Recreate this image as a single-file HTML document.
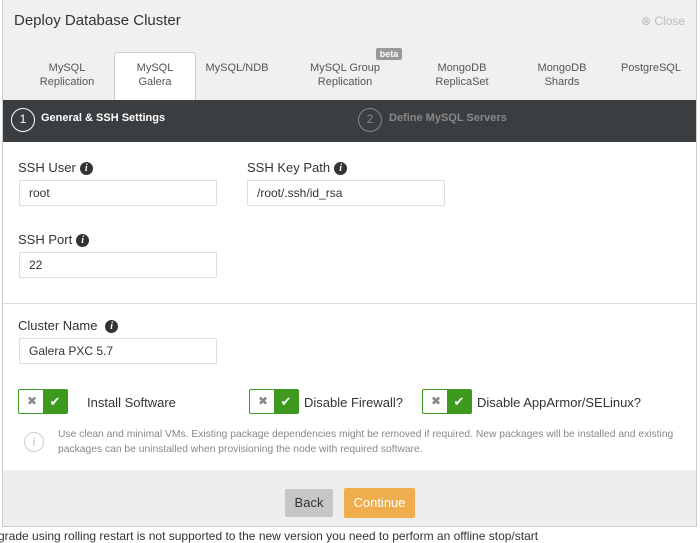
<!DOCTYPE html>
<html><head><style>
*{box-sizing:border-box;margin:0;padding:0}
body{width:700px;height:538px;background:#fff;font-family:"Liberation Sans",sans-serif;position:relative;overflow:hidden;color:#333}
.a{position:absolute}
.modal{left:2px;top:0;width:695px;height:527px;background:#fff;border-right:1px solid #ccc;border-left:1px solid #ccc;border-bottom:1px solid #ccc;overflow:hidden}
.hdr{left:0;top:0;width:695px;height:100px;background:#f0f0f0}
.tab{font-size:11px;color:#555;text-align:center;line-height:14px;top:61px}
.bar{left:0;top:100px;width:695px;height:42px;background:#3b3e40}
.circ{width:24px;height:24px;border:1.5px solid #fff;border-radius:50%;color:#fff;font-size:12px;text-align:center;line-height:21px}
.lbl{font-size:13px;color:#333}
.info{display:inline-block;width:13px;height:13px;border-radius:50%;background:#333;color:#fff;font-size:10px;font-style:italic;font-weight:bold;text-align:center;line-height:13px;font-family:"Liberation Serif",serif;vertical-align:1px;margin-left:4px}
.inp{height:26px;border:1px solid #ddd;border-radius:2px;font-size:12px;color:#333;padding-left:9px;line-height:24px;width:198px}
.tg{width:50px;height:25px;border:1px solid #3d9a1e;border-radius:2px;background:#fff}
.tg .x{position:absolute;left:8px;top:4px;font-size:12px;color:#888}
.tg .c{position:absolute;right:0;top:0;width:24px;height:23px;background:#3d9a1e;color:#fff;font-size:13px;text-align:center;line-height:23px}
.ft{left:0;top:470px;width:695px;height:57px;background:#eeeeee}
</style></head><body>
<div class="a" style="left:-2px;top:529px;font-size:12px;color:#333;white-space:nowrap">grade using rolling restart is not supported to the new version you need to perform an offline stop/start</div>
<div class="a modal">
<div class="a hdr"></div>
<div class="a" style="left:11px;top:12px;font-size:15px;color:#333">Deploy Database Cluster</div>
<div class="a" style="left:638px;top:14px;font-size:12px;color:#bbb">⊗ Close</div>
<div class="a" style="left:111px;top:52px;width:82px;height:48px;background:#fff;border:1px solid #ccc;border-bottom:none;border-radius:3px 3px 0 0"></div>
<div class="a tab" style="left:29px;width:70px">MySQL<br>Replication</div>
<div class="a tab" style="left:117px;width:70px">MySQL<br>Galera</div>
<div class="a tab" style="left:199px;width:70px">MySQL/NDB</div>
<div class="a tab" style="left:297px;width:90px">MySQL Group<br>Replication</div>
<div class="a" style="left:373px;top:48px;width:26px;height:12px;background:#999;color:#fff;font-size:9px;text-align:center;line-height:12px;border-radius:2px;font-weight:bold">beta</div>
<div class="a tab" style="left:419px;width:80px">MongoDB<br>ReplicaSet</div>
<div class="a tab" style="left:519px;width:80px">MongoDB<br>Shards</div>
<div class="a tab" style="left:613px;width:70px">PostgreSQL</div>
<div class="a bar"></div>
<div class="a circ" style="left:8px;top:108px">1</div>
<div class="a" style="left:38px;top:112px;font-size:11px;font-weight:bold;color:#fff">General &amp; SSH Settings</div>
<div class="a circ" style="left:355px;top:108px;border-color:#888;color:#888">2</div>
<div class="a" style="left:386px;top:112px;font-size:11px;font-weight:bold;color:#888">Define MySQL Servers</div>
<div class="a lbl" style="left:15px;top:160px">SSH User<span class="info">i</span></div>
<div class="a inp" style="left:16px;top:180px">root</div>
<div class="a lbl" style="left:244px;top:160px">SSH Key Path<span class="info">i</span></div>
<div class="a inp" style="left:244px;top:180px">/root/.ssh/id_rsa</div>
<div class="a lbl" style="left:15px;top:232px">SSH Port<span class="info">i</span></div>
<div class="a inp" style="left:16px;top:252px">22</div>
<div class="a" style="left:0;top:303px;width:695px;height:1px;background:#ddd"></div>
<div class="a lbl" style="left:15px;top:318px">Cluster Name <span class="info">i</span></div>
<div class="a inp" style="left:16px;top:338px">Galera PXC 5.7</div>
<div class="a tg" style="left:15px;top:389px"><span class="x">✖</span><span class="c">✔</span></div>
<div class="a lbl" style="left:84px;top:395px">Install Software</div>
<div class="a tg" style="left:246px;top:389px"><span class="x">✖</span><span class="c">✔</span></div>
<div class="a lbl" style="left:301px;top:395px">Disable Firewall?</div>
<div class="a tg" style="left:419px;top:389px"><span class="x">✖</span><span class="c">✔</span></div>
<div class="a lbl" style="left:474px;top:395px">Disable AppArmor/SELinux?</div>
<div class="a" style="left:21px;top:432px;width:20px;height:20px;border:1px solid #ccc;border-radius:50%;color:#bbb;font-size:12px;text-align:center;line-height:18px">i</div>
<div class="a" style="left:55px;top:428px;width:630px;font-size:10.3px;color:#888;line-height:14.5px">Use clean and minimal VMs. Existing package dependencies might be removed if required. New packages will be installed and existing packages can be uninstalled when provisioning the node with required software.</div>
<div class="a ft"></div>
<div class="a" style="left:282px;top:489px;width:48px;height:28px;background:#c6c6c6;border-radius:2px;font-size:13px;text-align:center;line-height:28px;color:#333">Back</div>
<div class="a" style="left:341px;top:488px;width:71px;height:30px;background:#f0ad4e;border-radius:2px;font-size:13px;text-align:center;line-height:30px;color:#fff">Continue</div>
</div>
</body></html>
